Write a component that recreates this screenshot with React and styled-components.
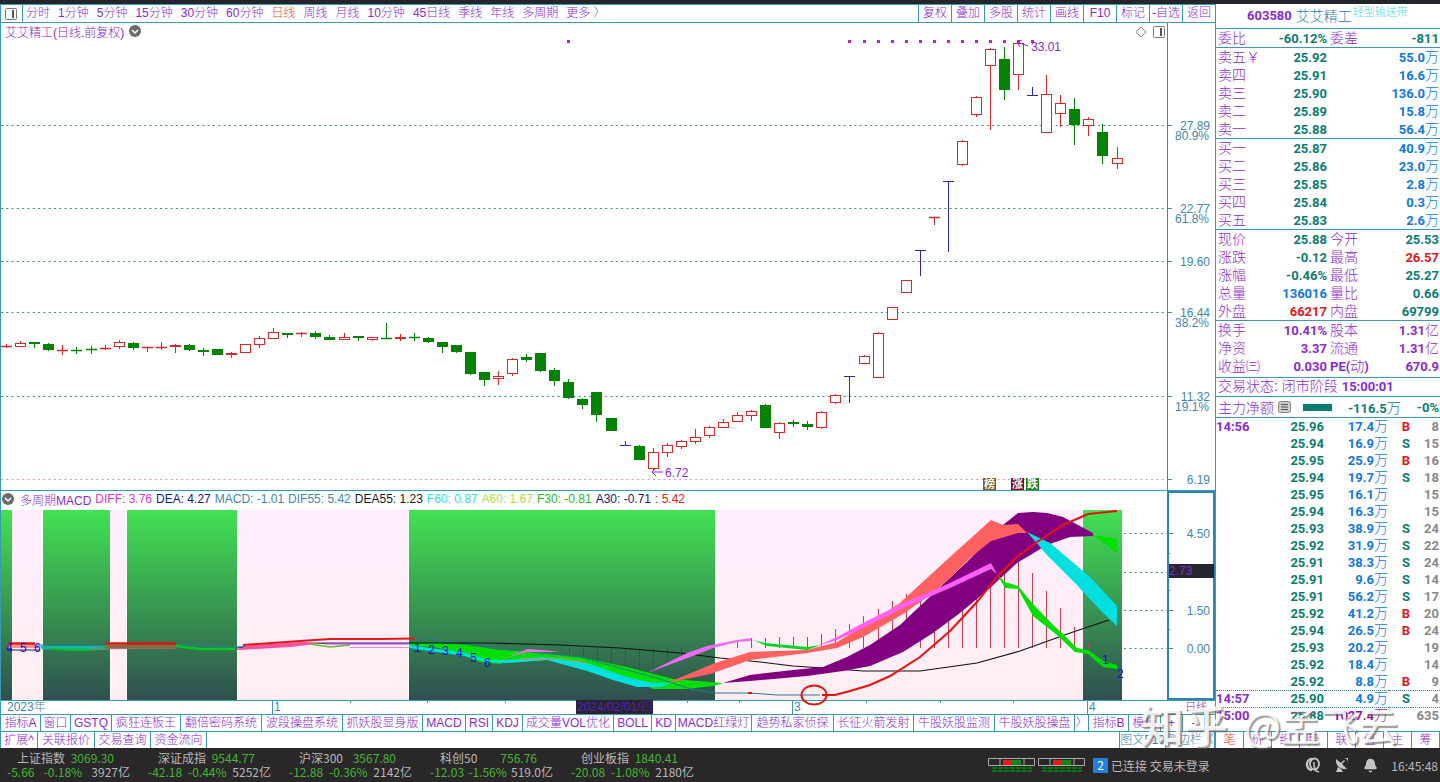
import React from 'react';
import styled, { createGlobalStyle } from 'styled-components';
import { Bell } from 'lucide-react';

const LINE = '#3b9ab2';
const PURPLE = '#8a2bd0';
const TEAL = '#0b7d72';
const BLUE = '#0f78e0';
const RED = '#e01818';
const AXIS = '#3f87ab';

const GlobalStyle = createGlobalStyle`
  body {
    margin: 0;
    background: #fff;
    font-family: 'Liberation Sans', 'Noto Sans CJK SC', sans-serif;
    font-size: 12px;
    font-weight: 300;
  }
  *, *::before, *::after {
    box-sizing: border-box;
  }
  button {
    margin: 0;
    padding: 0;
    border: 0;
    background: none;
    font: inherit;
    color: inherit;
    white-space: nowrap;
    cursor: pointer;
  }
  table {
    border-collapse: collapse;
    border-spacing: 0;
  }
`;

const Page = styled.div`
  position: relative;
  border-top: 4px solid #22262b;
`;

const Main = styled.div`
  display: grid;
  grid-template-columns: minmax(0, 1fr) 225px;
`;

const Left = styled.main`
  display: flex;
  flex-direction: column;
  border-left: 1px solid ${LINE};
`;

const Toolbar = styled.nav`
  display: flex;
  height: 19px;
  border-top: 1px solid ${LINE};
  border-bottom: 1px solid ${LINE};
  color: ${PURPLE};
`;

const PanelButton = styled.button`
  width: 22px;
  padding-right: 2px;
  border-right: 1px solid ${LINE};
  line-height: 0;
`;

const Periods = styled.div`
  display: flex;
  flex: 1;
  gap: 8px;
  padding-left: 3px;
`;

const Period = styled.button`
  color: ${p => (p.$on ? '#e8482c' : PURPLE)};
  line-height: 17px;
`;

const Tool = styled.button`
  width: 33px;
  border-left: 1px solid ${LINE};
  line-height: 17px;
`;

const Pane = styled.section`
  position: relative;
  border-bottom: ${p => (p.$line ? `1px solid ${LINE}` : '0')};
  svg {
    display: block;
    width: 100%;
    height: auto;
  }
`;

const Legend = styled.div`
  position: absolute;
  top: 0;
  left: 0;
  display: flex;
  align-items: center;
  gap: ${p => p.$gap}px;
  height: 16px;
  padding-left: ${p => p.$pad}px;
  font-size: 12px;
  color: ${PURPLE};
  white-space: nowrap;
  svg {
    width: 12px;
    height: 12px;
    margin-right: 2px;
  }
`;

const Value = styled.span`
  color: ${p => p.$c};
`;

const Corner = styled.div`
  position: absolute;
  top: 2px;
  right: 50px;
  display: flex;
  gap: 6px;
  svg {
    width: 12px;
    height: 14px;
  }
`;

const TabRow = styled.nav`
  display: flex;
  height: 17px;
  border-top: 1px solid ${LINE};
  color: ${PURPLE};
`;

const Tab = styled.button`
  flex: 0 0 ${p => p.$w}px;
  border-right: 1px solid ${LINE};
  line-height: 16px;
  color: ${p => p.$c || PURPLE};
`;

const Spacer = styled.span`
  flex: 1;
  border-right: 1px solid ${LINE};
`;

const Side = styled.aside`
  display: flex;
  flex-direction: column;
  border-left: 1px solid ${LINE};
  font-size: 14px;
  color: ${PURPLE};
  b {
    font-family: Roboto, 'Liberation Sans', sans-serif;
    font-size: 13px;
    font-weight: 700;
    line-height: 1;
  }
`;

const StockTitle = styled.h1`
  display: flex;
  gap: 4px;
  height: 24px;
  margin: 0;
  padding-left: 31px;
  font-size: 14px;
  font-weight: 300;
  line-height: 24px;
  color: #2a7fb5;
  b {
    color: ${PURPLE};
    line-height: 24px;
  }
  small {
    margin-left: -3px;
    font-size: 11px;
    line-height: 16px;
    color: #52d8e4;
  }
`;

const Box = styled.div`
  padding-bottom: ${p => p.$pb || 0}px;
  border-top: 1px solid ${LINE};
`;

const Grid = styled.table`
  width: 100%;
  table-layout: fixed;
  td, th {
    height: 18px;
    padding: 0;
    line-height: 16px;
    text-align: left;
    font-weight: 300;
    white-space: nowrap;
  }
`;

const Cell = styled.td`
  && {
    text-align: right;
    color: ${p => p.$c || PURPLE};
    padding-right: 1px;
  }
`;

const Label = styled.th`
  && {
    padding-left: 2px;
  }
`;

const StateLine = styled.div`
  height: 18px;
  padding-left: 2px;
  line-height: 17px;
`;

const NetLine = styled.div`
  display: flex;
  align-items: center;
  height: 20px;
  padding: 0 1px 0 2px;
  color: ${TEAL};
  white-space: nowrap;
  > * {
    flex: none;
  }
`;

const NetName = styled.span`
  width: 60px;
  color: ${PURPLE};
`;

const NetBar = styled.span`
  width: 29px;
  height: 7px;
  margin: 0 16px 0 12px;
  background: ${TEAL};
`;

const NetPct = styled.b`
  margin-left: auto;
`;

const Ticks = styled(Grid)`
  td {
    height: 17px;
    line-height: 15px;
  }
  tr.cut td {
    border-top: 1px dotted ${AXIS};
  }
`;

const SideTabs = styled.nav`
  display: flex;
  height: 17px;
  margin-top: auto;
  border-top: 1px solid ${LINE};
  font-size: 12px;
`;

const SideTab = styled.button`
  flex: 1;
  border-right: 1px solid ${LINE};
  line-height: 16px;
  color: ${p => (p.$on ? '#e8482c' : PURPLE)};
`;

const StatusBar = styled.footer`
  display: flex;
  align-items: center;
  height: 34px;
  background: #292728;
  color: #b9b9b9;
  font-family: 'Noto Sans CJK SC', sans-serif;
  font-weight: 400;
`;

const Quote = styled.div`
  display: grid;
  grid-template-rows: 14px 14px;
  width: 141px;
  padding: 0 11px 0 7px;
  line-height: 14px;
  white-space: nowrap;
`;

const QuoteLine = styled.div`
  display: flex;
  justify-content: space-between;
  padding: ${p => (p.$top ? '0 16px 0 10px' : '0')};
`;

const Down = styled.span`
  color: #46b535;
`;

const Link = styled.div`
  display: flex;
  align-items: center;
  gap: 3px;
  flex: 1;
  margin-left: 283px;
`;

const Count = styled.span`
  width: 15px;
  height: 15px;
  margin-left: 5px;
  background: #2180d8;
  color: #fff;
  text-align: center;
  line-height: 14px;
`;

const Tray = styled.div`
  display: flex;
  align-items: center;
  gap: 13px;
  padding-right: 2px;
`;

const Watermark = styled.div`
  position: absolute;
  right: 42px;
  bottom: 34px;
  display: flex;
  align-items: center;
  gap: 16px;
  height: 48px;
  font-family: 'Noto Sans CJK SC', sans-serif;
  font-size: 39px;
  font-weight: 400;
  color: rgba(255, 255, 255, 0.85);
  text-shadow: 2px 2px 1px rgba(90, 90, 90, 0.6);
  pointer-events: none;
  white-space: nowrap;
  strong {
    font-size: 44px;
    font-weight: 500;
  }
`;

const periods = ['分时', '1分钟', '5分钟', '15分钟', '30分钟', '60分钟', '日线', '周线', '月线',
  '10分钟', '45日线', '季线', '年线', '多周期', '更多 〉'];

const tools = ['复权', '叠加', '多股', '统计', '画线', 'F10', '标记', '-自选', '返回'];

// kind, high, body top, body bottom, low
const candles = [
  ['r', 344, 346, 347, 348], ['r', 341, 343, 347, 347], ['g', 342, 342, 344, 348], ['g', 343, 344, 350, 351],
  ['r', 345, 350, 351, 355], ['g', 347, 350, 351, 354], ['g', 346, 349, 350, 354], ['r', 345, 348, 349, 350],
  ['r', 340, 342, 347, 349], ['g', 342, 343, 348, 350], ['r', 347, 347, 348, 352], ['r', 342, 347, 348, 350],
  ['r', 344, 345, 347, 353], ['g', 344, 345, 350, 351], ['g', 348, 350, 352, 356], ['g', 349, 349, 355, 355],
  ['r', 352, 353, 355, 358], ['r', 344, 344, 353, 353], ['r', 336, 338, 345, 348], ['r', 328, 332, 339, 339],
  ['g', 333, 333, 335, 338], ['r', 332, 333, 334, 337], ['g', 331, 333, 337, 339], ['g', 335, 337, 340, 340],
  ['r', 333, 337, 340, 340], ['g', 336, 336, 338, 341], ['r', 337, 337, 340, 341], ['g', 323, 338, 339, 339],
  ['r', 334, 337, 339, 341], ['g', 333, 337, 338, 341], ['g', 337, 338, 342, 343], ['g', 342, 342, 347, 353],
  ['g', 345, 345, 352, 353], ['g', 352, 352, 374, 375], ['g', 372, 372, 380, 386], ['r', 371, 376, 379, 385],
  ['r', 358, 359, 374, 376], ['g', 354, 357, 360, 362], ['g', 353, 353, 371, 372], ['g', 368, 370, 381, 386],
  ['g', 379, 382, 398, 399], ['g', 398, 399, 405, 409], ['g', 392, 392, 415, 422], ['g', 418, 418, 431, 431],
  ['b', 441, 445, 446, 446], ['g', 445, 446, 460, 460], ['r', 448, 452, 469, 471], ['r', 443, 445, 453, 457],
  ['r', 440, 441, 447, 449], ['r', 429, 437, 442, 444], ['r', 426, 427, 436, 438],
  ['r', 419, 422, 428, 428], ['r', 412, 415, 422, 422], ['r', 410, 411, 416, 421], ['g', 404, 405, 428, 428],
  ['r', 422, 423, 433, 439], ['g', 420, 422, 424, 427], ['g', 421, 424, 427, 430], ['r', 411, 412, 428, 429],
  ['r', 394, 395, 403, 404], ['b', 376, 376, 377, 403], ['r', 355, 356, 364, 364], ['r', 332, 333, 378, 378],
  ['r', 307, 307, 320, 320], ['r', 280, 280, 293, 293], ['b', 250, 250, 251, 276], ['t', 217, 217, 218, 225],
  ['b', 181, 181, 182, 252], ['r', 140, 141, 165, 166], ['r', 96, 97, 115, 117], ['r', 48, 49, 66, 130],
  ['g', 47, 59, 90, 100], ['r', 42, 43, 75, 90], ['b', 87, 95, 96, 96], ['r', 75, 94, 133, 133],
  ['r', 95, 103, 114, 127], ['g', 98, 109, 125, 145], ['r', 117, 119, 126, 136], ['g', 124, 132, 156, 164],
  ['r', 147, 158, 164, 169],
];
const STEP = 1110.3 / (candles.length - 1);
const xAt = i => Math.round(6.2 + STEP * i);
const candleColor = { r: '#d62a2a', t: '#c03030', g: '#048204', b: '#2a2aa8' };

const priceLevels = [
  [126, '27.89', '80.9%'], [209, '22.77', '61.8%'], [262, '19.60'],
  [313, '16.44', '38.2%'], [397, '11.32', '19.1%'], [480, '6.19'],
];

const legend = [
  ['DIFF: 3.76', '#d838d0'], ['DEA: 4.27', '#181880'], ['MACD: -1.01', '#3f87ab'], ['DIF55: 5.42', '#3f87ab'],
  ['DEA55: 1.23', '#181818'], ['F60: 0.87', '#30dce8'], ['A60: 1.67', '#a8e050'], ['F30: -0.81', '#28b828'],
  ['A30: -0.71', '#201868'], [': 5.42', '#d82020'],
];

const histogram = [
  [737, 640], [751, 638], [765, 638], [779, 637], [793, 637], [807, 637], [821, 634], [835, 629],
  [849, 624], [863, 616], [878, 609], [892, 601], [906, 594], [920, 588], [934, 582], [948, 575],
  [962, 574], [976, 570], [990, 565], [1004, 572], [1018, 560], [1032, 573], [1046, 591], [1060, 608],
  [1074, 627], [1088, 643],
];

const bands = [[1, 12], [43, 110], [127, 237], [409, 715], [1083, 1122]];
const pinkBands = [[13, 42], [111, 126], [238, 408], [715, 1083]];

const marks = [
  ['4', 6, 652], ['5', 20, 652], ['6', 34, 652], ['1', 414, 652], ['2', 428, 654], ['3', 442, 655],
  ['4', 456, 657], ['5', 470, 662], ['6', 484, 667], ['1', 1102, 664], ['2', 1117, 678],
];

const indicators = [
  ['窗口', 30], ['GSTQ', 41], ['疯狂连板王', 69], ['翻倍密码系统', 81], ['波段操盘系统', 81], ['抓妖股显身版', 80],
  ['MACD', 43], ['RSI', 27], ['KDJ', 30], ['成交量VOL优化', 91], ['BOLL', 38], ['KD', 24], ['MACD红绿灯', 76],
  ['趋势私家侦探', 82], ['长征火箭发射', 80], ['牛股妖股监测', 81], ['牛股妖股操盘', 80], ['〉', 14], ['指标B', 40],
  ['模板', 32], ['+', 22], ['-', 22],
];

const asks = [['卖五￥', '25.92', '55.0'], ['卖四', '25.91', '16.6'], ['卖三', '25.90', '136.0'],
  ['卖二', '25.89', '15.8'], ['卖一', '25.88', '56.4']];
const bids = [['买一', '25.87', '40.9'], ['买二', '25.86', '23.0'], ['买三', '25.85', '2.8'],
  ['买四', '25.84', '0.3'], ['买五', '25.83', '2.6']];

const quoteRows = [
  ['现价', '25.88', TEAL, '今开', '25.53', TEAL],
  ['涨跌', '-0.12', TEAL, '最高', '26.57', RED],
  ['涨幅', '-0.46%', TEAL, '最低', '25.27', TEAL],
  ['总量', '136016', BLUE, '量比', '0.66', TEAL],
  ['外盘', '66217', RED, '内盘', '69799', TEAL],
];
const financeRows = [
  ['换手', '10.41%', PURPLE, '股本', '1.31', PURPLE, '亿'],
  ['净资', '3.37', PURPLE, '流通', '1.31', PURPLE, '亿'],
  ['收益㈢', '0.030', PURPLE, 'PE(动)', '670.9', PURPLE],
];

const ticks = [
  ['14:56', '25.96', '17.4', 'B', 8], ['', '25.94', '16.9', 'S', 15], ['', '25.95', '25.9', 'B', 16],
  ['', '25.94', '19.7', 'S', 18], ['', '25.95', '16.1', '', 15], ['', '25.94', '16.3', '', 15],
  ['', '25.93', '38.9', 'S', 24], ['', '25.92', '31.9', 'S', 22], ['', '25.91', '38.3', 'S', 24],
  ['', '25.91', '9.6', 'S', 14], ['', '25.91', '56.2', 'S', 17], ['', '25.92', '41.2', 'B', 20],
  ['', '25.94', '26.5', 'B', 24], ['', '25.93', '20.2', '', 19], ['', '25.92', '18.4', '', 14],
  ['', '25.92', '8.8', 'B', 9], ['14:57', '25.90', '4.9', 'S', 4], ['15:00', '25.88', '1027.4', '', 635],
];

const indexes = [
  ['上证指数', '3069.30', '-5.66', '-0.18%', '3927亿'],
  ['深证成指', '9544.77', '-42.18', '-0.44%', '5252亿'],
  ['沪深300', '3567.80', '-12.88', '-0.36%', '2142亿'],
  ['科创50', '756.76', '-12.03', '-1.56%', '519.0亿'],
  ['创业板指', '1840.41', '-20.08', '-1.08%', '2180亿'],
];

const PanelIcon = () => (
  <svg width="12" height="12" viewBox="0 0 12 12" fill="none" stroke="#777">
    <rect x="0.5" y="0.5" width="11" height="11" rx="1" />
    <rect x="7" y="2" width="2" height="8" fill="#555" stroke="none" />
  </svg>
);

const ArrowIcon = () => (
  <svg viewBox="0 0 12 12">
    <circle cx="6" cy="6" r="6" fill="#6b6b6b" />
    <path d="M3 5l3 3 3-3" fill="none" stroke="#fff" strokeWidth="1.5" />
  </svg>
);

function Candle({ data, x }) {
  const [kind, high, top, bottom, low] = data;
  const color = candleColor[kind];
  const flat = bottom - top < 2;
  return (
    <g stroke={color} fill={kind === 'g' ? color : '#fff'}>
      <path d={`M${x + 0.5} ${high}V${top}M${x + 0.5} ${bottom}V${low}`} />
      {flat
        ? <path d={`M${x - 5} ${top + 0.5}h11`} strokeWidth={kind === 'b' ? 1 : 1.5} />
        : <rect x={x - 4.5} y={top + 0.5} width="10" height={bottom - top - 1} />}
    </g>
  );
}

function PriceChart() {
  return (
    <svg viewBox="1 23 1214 467" fontFamily="Liberation Sans, Noto Sans CJK SC, sans-serif" fontSize="12">
      {priceLevels.map(([y, price, pct]) => (
        <g key={y}>
          <path d={`M1 ${y - 0.5}H1167`} stroke={y === 480 ? '#cf9fc0' : '#4d8793'} strokeDasharray="2 3.3" />
          <path d={`M1167 ${y - 0.5}h5`} stroke={AXIS} />
          <text x="1210" y={y + 4} textAnchor="end" fill={AXIS}>{price}</text>
          {pct && <text x="1209" y={y + 14} textAnchor="end" fill={AXIS}>{pct}</text>}
        </g>
      ))}
      <path d="M1167.5 23V491" stroke={AXIS} />
      {candles.map((c, i) => <Candle key={i} data={c} x={xAt(i)} />)}
      {[40, 60, 61, 62, 63, 64, 65, 66, 67, 68, 69, 70, 71, 72, 73].map(i => (
        <rect key={i} x={xAt(i) - 1} y="40" width="3" height="3" fill="#c020c8" />
      ))}
      <g stroke={PURPLE} fill="none">
        <path d="M1028 46l-11-4M1022 40l-5 2l3 5" />
        <path d="M663 472h-10M656 468l-4 4l4 4" />
      </g>
      <text x="1031" y="51" fill={PURPLE}>33.01</text>
      <text x="665" y="477" fill={PURPLE}>6.72</text>
      {[[983, '#8b5a2b', '榜'], [1011, '#7a0c14', '涨'], [1026, '#148020', '跌']].map(([x, c, t]) => (
        <g key={x}>
          <rect x={x} y="478" width="13" height="13" fill={c} />
          <text x={x + 1} y="488" fontSize="11" fontWeight="700" fill="#fff">{t}</text>
        </g>
      ))}
    </svg>
  );
}

function MacdChart() {
  return (
    <svg viewBox="1 491 1214 209" fontFamily="Liberation Sans, sans-serif" fontSize="12">
      <defs>
        <linearGradient id="down" x1="0" y1="0" x2="0" y2="1">
          <stop offset="0" stopColor="#42e252" />
          <stop offset="1" stopColor="#2f4f4f" />
        </linearGradient>
        <linearGradient id="up" x1="0" y1="0" x2="0" y2="1">
          <stop offset="0" stopColor="#ffeeff" />
          <stop offset="1" stopColor="#ffeef0" />
        </linearGradient>
      </defs>
      {pinkBands.map(([a, b]) => <rect key={a} x={a} y="510" width={b - a} height="190" fill="url(#up)" />)}
      {bands.map(([a, b]) => <rect key={a} x={a} y="510" width={b - a} height="190" fill="url(#down)" />)}
      {[533, 572, 610, 648].map(y => (
        <path key={y} d={`M1124 ${y + 0.5}H1167`} stroke="#4d8793" strokeDasharray="2 3.3" />
      ))}
      {histogram.map(([x, y]) => <path key={x} d={`M${x + 0.5} ${y}V648`} stroke="#c8404e" />)}
      <path d="M569.5 648v9M583.5 648v12M597.5 648v14M611.5 648v18M625.5 648v20M639.5 648v22M653.5 648v20M667.5 648v16M681.5 648v8" stroke="#1c6a30" />

      {/* flat stretch before the drop */}
      <path d="M8 646L40 645L80 645L110 646L176 644L237 647L300 643L409 643" fill="none" stroke="#1d84a0" />
      <path d="M8 650H40M237 648L300 643.5L409 643.5" fill="none" stroke="#202060" strokeWidth="1.2" />
      <path d="M40 646L70 646L105 646L105 650L70 650.5L42 649Z" fill="#12b8a0" />
      <path d="M50 649L85 650L110 648" fill="none" stroke="#04c030" strokeWidth="2" />
      <path d="M90 649L176 648" stroke="#b070b0" />
      <path d="M105 646.5H176" stroke="#8a6a3c" strokeWidth="4" />
      <path d="M105 643.5H176M8 643.5H35" stroke="#d81818" strokeWidth="2.5" />
      <path d="M8 646.5H38" stroke="#ff9090" strokeWidth="3" />
      <path d="M176 646L200 649L235 649" fill="none" stroke="#04c820" strokeWidth="2.5" />
      <path d="M235 650L250 645L300 642L325 643L290 647L240 650Z" fill="#ff50a0" />
      <path d="M310 644L330 647L350 645" fill="none" stroke="#58c030" strokeWidth="1.5" />
      <path d="M325 643.5H409" stroke="#a848c0" strokeWidth="2" />
      <path d="M350 647.5H409" stroke="#d890e8" />
      <path d="M243 645L300 641L330 639L380 639L415 638.5" fill="none" stroke="#e01818" strokeWidth="2" />

      <path d="M409 643L440 643L467 645L487 648L500 650L527 651L580 657L627 667L673 679L723 683L713 686L687 689L653 689L627 677L587 665L543 658L513 660L500 664L480 662L462 655L440 648L409 645Z" fill="#00e000" />
      <path d="M409 645L467 653L487 660L507 660L543 657L557 659L587 663L627 677L653 683L672 683L660 687L637 687L613 680L587 671L547 660L507 663L485 662L465 656L409 648Z" fill="#00e0e0" />
      <path d="M415 638L467 643L500 649L580 657L627 670L657 678L690 689L715 693L750 693L777 695L820 695" fill="none" stroke="#2a7890" />
      <path d="M409 643L460 643L490 643L560 645L620 648L680 653L720 658L760 662L793 666L823 668L863 671L920 671L977 663L1020 651L1073 632L1109 620" fill="none" stroke="#101010" strokeWidth="1.2" />
      <path d="M500 661L527 649L543 650L560 652L527 652L513 656Z" fill="#ec70e8" />
      <path d="M647 673L687 653L707 646L737 640L752 638L750 641L737 642L713 648L693 656Z" fill="#f468f4" />
      <path d="M753 640L765 643L807 647L821 645L807 650L767 646Z" fill="#00d820" />
      <path d="M520 659L560 658L587 663" fill="none" stroke="#d09060" />

      <path d="M723 683L750 675L793 670L823 667L847 657L870 645L900 625L937 590L967 562L1003 525L1018 513L1033 512L1047 513L1063 517L1093 533L1093 536L1070 537L1047 545L1017 563L990 588L960 613L933 633L903 652L870 666L843 671L807 676L750 681Z" fill="#800080" />
      <path d="M667 683L715 663L750 652L807 650L837 642L877 618L900 603L927 578L950 557L991 520L1003 525L1018 524L1027 533L1018 533L991 541L970 558L950 578L933 593L903 614L863 637L837 648L807 653L750 660L710 674Z" fill="#ff6060" />
      <path d="M817 646L837 637L863 623L903 603L927 593L950 583L991 563L997 574L991 569L950 588L903 608L863 628L837 640Z" fill="#ff60f8" />
      <path d="M997 574L1005 582L1018 586L1033 604L1053 625L1062 633L1077 648L1088 650L1103 661L1117 665L1117 669L1103 667L1088 654L1075 652L1057 635L1033 616L1018 589L1005 588Z" fill="#00e000" />
      <path d="M1093 535L1117 539V553Z" fill="#00e000" />
      <path d="M1027 532L1050 543L1090 577L1117 606V626L1102 612L1075 583L1047 555Z" fill="#00e0e0" />
      <path d="M822 695L835 695L850 691L870 685L890 676L920 657L950 631L977 602L997 577L1017 557L1037 542L1063 525L1088 514L1117 511" fill="none" stroke="#e81010" strokeWidth="2" />
      <rect x="748" y="692" width="4" height="2" fill="#e01818" />
      {marks.map(([t, x, y]) => <text key={x} x={x} y={y} fill="#1010d0">{t}</text>)}

      <rect x="1168" y="492" width="46" height="207" fill="none" stroke="#2a86ad" strokeWidth="2" />
      {[[533, '4.50'], [610, '1.50'], [648, '0.00']].map(([y, t]) => (
        <g key={y}>
          <path d={`M1167 ${y + 0.5}h6`} stroke={AXIS} />
          <text x="1210" y={y + 5} textAnchor="end" fill={AXIS}>{t}</text>
        </g>
      ))}
      <path d="M1167 553.5h3M1167 590.5h3M1167 629.5h3" stroke={AXIS} />
      <rect x="1169" y="564" width="45" height="14" fill="#25272e" />
      <text x="1169" y="575" fill={PURPLE}>2.73</text>
    </svg>
  );
}

function DateAxis() {
  return (
    <svg viewBox="1 700 1214 14" overflow="visible" fontFamily="Liberation Sans, Noto Sans CJK SC, sans-serif" fontSize="12">
      <path d="M1 700.5H1215M272.5 700v14M792.5 700v14M1087.5 700v14" stroke={LINE} />
      <path d="M350.5 700v3M427.5 700v3M505.5 700v3M687.5 700v3M739.5 700v3M866.5 700v3M940.5 700v3M1013.5 700v3" stroke={LINE} />
      <ellipse cx="814" cy="695" rx="12.5" ry="9.5" fill="none" stroke="#e01818" strokeWidth="2" />
      <text x="7" y="711" fill={AXIS}>2023年</text>
      <text x="274" y="711" fill={AXIS}>1</text>
      <text x="794" y="711" fill={AXIS}>3</text>
      <text x="1089" y="711" fill={AXIS}>4</text>
      <rect x="576" y="700" width="77" height="14" fill="#25252e" />
      <text x="577" y="711" fill="#5a1fc0">2024/02/01/四</text>
      <text x="1185" y="711" fontSize="11" fill={PURPLE}>日线</text>
    </svg>
  );
}

function Depth({ rows }) {
  return (
    <Box>
      <Grid>
        <tbody>
          {rows.map(([name, price, vol]) => (
            <tr key={name}>
              <Label scope="row">{name}</Label>
              <Cell $c={TEAL}><b>{price}</b></Cell>
              <Cell colSpan="2" $c={BLUE}><b>{vol}</b>万</Cell>
            </tr>
          ))}
        </tbody>
      </Grid>
    </Box>
  );
}

function Pairs({ rows, pb }) {
  return (
    <Box $pb={pb}>
      <Grid>
        <tbody>
          {rows.map(([a, av, ac, b, bv, bc, unit]) => (
            <tr key={a}>
              <Label scope="row">{a}</Label>
              <Cell $c={ac}><b>{av}</b></Cell>
              <Label scope="row">{b === 'PE(动)' ? <><b>PE(</b>动<b>)</b></> : b}</Label>
              <Cell $c={bc}><b>{bv}</b>{unit}</Cell>
            </tr>
          ))}
        </tbody>
      </Grid>
    </Box>
  );
}

function TickTable() {
  return (
    <Box>
      <Ticks>
        <colgroup>
          <col width="50" />
          <col width="59" />
          <col width="64" />
          <col width="22" />
          <col />
        </colgroup>
        <tbody>
          {ticks.map(([time, price, vol, side, n], i) => (
            <tr key={i} className={i > 15 ? 'cut' : undefined}>
              <td><b>{time}</b></td>
              <Cell $c={TEAL}><b>{price}</b></Cell>
              <Cell $c={i === 17 ? '#a010a0' : BLUE}><b>{vol}</b>万</Cell>
              <Cell $c={side === 'B' ? RED : TEAL}><b>{side}</b></Cell>
              <Cell $c="#888"><b>{n}</b></Cell>
            </tr>
          ))}
        </tbody>
      </Ticks>
    </Box>
  );
}

const Meter = () => (
  <svg width="47" height="14" viewBox="0 0 47 14">
    <path d="M0.5 0.5h46v7h-46zM12 0.5v7M36 0.5v7" fill="none" stroke="#aaa" />
    <rect x="15" y="2" width="9" height="5" fill="#f01818" />
    <rect x="24" y="2" width="9" height="5" fill="#108818" />
    <path d="M4 10h40M4 13h40" stroke="#107018" strokeWidth="2" strokeDasharray="5 1" />
  </svg>
);

function App() {
  return (
    <Page>
      <GlobalStyle />
      <Main>
        <Left>
          <Toolbar>
            <PanelButton aria-label="panel"><PanelIcon /></PanelButton>
            <Periods>
              {periods.map(p => <Period key={p} $on={p === '日线'}>{p}</Period>)}
            </Periods>
            {tools.map(t => <Tool key={t}>{t}</Tool>)}
          </Toolbar>
          <Pane $line>
            <PriceChart />
            <Legend $pad={4} $gap={5}>艾艾精工(日线.前复权) <ArrowIcon /></Legend>
            <Corner>
              <svg viewBox="0 0 12 14"><path d="M6 2l5 5-5 5-5-5z" fill="none" stroke="#888" /></svg>
              <PanelIcon />
            </Corner>
          </Pane>
          <Pane>
            <MacdChart />
            <Legend $pad={1} $gap={4}>
              <ArrowIcon />
              <span>多周期MACD</span>
              {legend.map(([t, c]) => <Value key={t} $c={c}>{t}</Value>)}
            </Legend>
          </Pane>
          <Pane><DateAxis /></Pane>
          <TabRow>
            <Tab $w={40}>指标A</Tab>
            {indicators.map(([t, w]) => <Tab key={t} $w={w}>{t}</Tab>)}
          </TabRow>
          <TabRow>
            <Tab $w={37}>扩展^</Tab>
            <Tab $w={57}>关联报价</Tab>
            <Tab $w={56}>交易查询</Tab>
            <Tab $w={56}>资金流向</Tab>
            <Spacer />
            <Tab $w={45} $c="#2a7fb5">图文F10</Tab>
            <Tab $w={47} $c="#2a7fb5">侧边栏《</Tab>
          </TabRow>
        </Left>
        <Side>
          <StockTitle><b>603580</b>艾艾精工<small>轻型输送带</small></StockTitle>
          <Pairs rows={[['委比', '-60.12%', TEAL, '委差', '-811', TEAL]]} />
          <Depth rows={asks} />
          <Depth rows={bids} />
          <Pairs rows={quoteRows} />
          <Pairs rows={financeRows} pb={2} />
          <Box><StateLine>交易状态: 闭市阶段 <b>15:00:01</b></StateLine></Box>
          <Box>
            <NetLine>
              <NetName>主力净额</NetName>
              <svg width="13" height="12" viewBox="0 0 13 12">
                <rect x="0.5" y="0.5" width="12" height="11" rx="2" fill="#ccc" stroke="#888" />
                <path d="M3 3.5h7M3 6h7M3 8.5h7" stroke="#555" />
              </svg>
              <NetBar />
              <span><b>-116.5</b>万</span>
              <NetPct>-0%</NetPct>
            </NetLine>
          </Box>
          <TickTable />
          <SideTabs>
            {['笔', '价', '细', '势', '联', '值', '主', '筹'].map((t, i) => (
              <SideTab key={t} $on={i === 0}>{t}</SideTab>
            ))}
          </SideTabs>
        </Side>
      </Main>
      <StatusBar>
        {indexes.map(([name, value, diff, pct, amount]) => (
          <Quote key={name}>
            <QuoteLine $top><span>{name}</span><Down>{value}</Down></QuoteLine>
            <QuoteLine><Down>{diff}</Down><Down>{pct}</Down><span>{amount}</span></QuoteLine>
          </Quote>
        ))}
        <Link>
          <Meter />
          <Meter />
          <Count>2</Count>
          <span>已连接 交易未登录</span>
        </Link>
        <Tray>
          <svg width="16" height="16" viewBox="0 0 16 16" fill="none" stroke="#c4c4c4">
            <path d="M7 2a5 5.5 0 0 0 0 11" strokeWidth="2.5" />
            <ellipse cx="9.5" cy="7" rx="4.5" ry="5.5" strokeWidth="1.8" />
            <path d="M9 5v4l2 5 3 1" strokeWidth="1.5" />
          </svg>
          <svg width="16" height="16" viewBox="0 0 16 16" fill="#c4c4c4">
            <path d="M2 2C1 8 6 13 13 12L8 7l3-3-1-1-3 3z" />
            <path d="M10 1a5 5 0 0 1 4 5V1zM4 10l-2 5h7l-2-3z" />
          </svg>
          <Bell size={15} fill="#c4c4c4" color="#c4c4c4" />
          <span>16:45:48</span>
        </Tray>
      </StatusBar>
      <Watermark><strong>知乎</strong><span>@孟飞云</span></Watermark>
    </Page>
  );
}

export default App;
